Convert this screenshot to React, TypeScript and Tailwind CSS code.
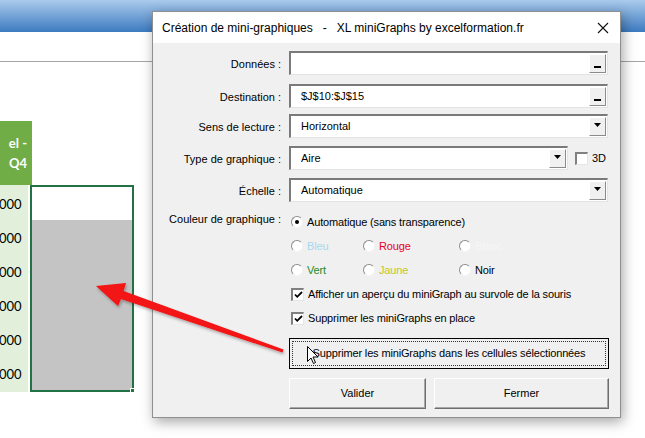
import React from "react";

const ui = { fontFamily: '"Liberation Sans", Arial, sans-serif' };
const sheet = { fontFamily: 'Lato, "Open Sans", sans-serif' };

const values = ["000", "000", "000", "000", "000", "000"];

function SideButton({ kind }: { kind: "range" | "drop" }) {
  return (
    <div className="m-[1px] flex w-[17px] items-end justify-center border border-t-white border-l-white border-b-[#8a8a8a] border-r-[#8a8a8a] bg-[#f0f0f0]">
      {kind === "range" ? (
        <div className="mb-[4px] h-[2px] w-[7px] bg-black" />
      ) : (
        <svg width="7" height="4" viewBox="0 0 7 4" className="mb-[8px]">
          <path d="M0 0h7L3.5 4z" fill="#000" />
        </svg>
      )}
    </div>
  );
}

function Field({ value, kind, wide = true }: { value?: string; kind: "range" | "drop"; wide?: boolean }) {
  return (
    <div
      className={
        (wide ? "w-[319px] " : "w-[279px] ") +
        "flex h-[24px] items-stretch border-t-2 border-l-2 border-b border-r border-t-[#7a7a7a] border-l-[#7a7a7a] border-b-[#e3e3e3] border-r-[#e3e3e3] bg-white"
      }
    >
      <div className="flex flex-1 items-center pl-[10px] text-[11px] text-black">{value}</div>
      <SideButton kind={kind} />
    </div>
  );
}

function Row({ label, children, className }: { label: string; children: React.ReactNode; className: string }) {
  return (
    <div className={"flex items-center gap-[8px] " + className}>
      <div className="w-[128px] pt-[2px] text-right text-[11px] text-black">{label}</div>
      {children}
    </div>
  );
}

function Radio({ checked = false }: { checked?: boolean }) {
  return (
    <div className="flex h-[12px] w-[12px] shrink-0 items-center justify-center rounded-full border border-t-[#8c8c8c] border-l-[#8c8c8c] border-b-[#f4f4f4] border-r-[#f4f4f4] bg-white">
      {checked && <div className="h-[4px] w-[4px] rounded-full bg-black" />}
    </div>
  );
}

function Check() {
  return (
    <div className="flex h-[13px] w-[13px] shrink-0 items-center justify-center border-t-2 border-l-2 border-b border-r border-t-[#808080] border-l-[#808080] border-b-[#e6e6e6] border-r-[#e6e6e6] bg-white">
      <svg width="9" height="8" viewBox="0 0 9 8">
        <path d="M1 3.5l2.2 2.3L8 1" fill="none" stroke="#000" strokeWidth="1.8" />
      </svg>
    </div>
  );
}

function Option({ label, color, checked, w }: { label: string; color: string; checked?: boolean; w: string }) {
  return (
    <div className={"flex items-center gap-[4px] " + w}>
      <Radio checked={checked} />
      <span className="text-[11px] tracking-[-0.15px]" style={{ color }}>
        {label}
      </span>
    </div>
  );
}

function RaisedButton({ label, w }: { label: string; w: string }) {
  return (
    <div
      className={
        w +
        " flex h-[31px] items-center justify-center border border-t-white border-l-white border-b-[#6e6e6e] border-r-[#6e6e6e] bg-[#f0f0f0] text-[11px] text-black shadow-[inset_-1px_-1px_0_#a8a8a8]"
      }
    >
      {label}
    </div>
  );
}

export default function App() {
  return (
    <div className="relative h-[438px] w-[645px] overflow-hidden bg-white" style={ui}>
      {/* Excel background */}
      <div className="h-[32px] bg-linear-to-b from-[#aacbeb] to-[#3c7bc0]" />
      <div className="h-[30px] border-b border-[#a6a6a6] bg-white" />
      <div className="flex" style={sheet}>
        <div className="w-[30px] pt-[59px]">
          <div className="flex h-[64px] w-[32px] flex-col items-end justify-center bg-[#70ad47] pr-[5px] text-[13px] font-bold leading-[20px] text-white">
            <span>el -</span>
            <span>Q4</span>
          </div>
          <div className="flex w-[28px] flex-col bg-[#e2efda] pt-[3px]">
            {values.map((v, i) => (
              <div key={i} className="flex h-[34px] items-center text-[13px] text-black">
                <span className="-ml-[1px]">{v}</span>
              </div>
            ))}
          </div>
        </div>
        <div className="relative mt-[123px] flex h-[207px] w-[104px] flex-col border-2 border-[#217346]">
          <div className="h-[33px] bg-white" />
          <div className="flex-1 bg-[#c4c4c4]" />
          <div className="absolute -bottom-[3px] -right-[3px] h-[5px] w-[5px] border border-white bg-[#217346]" />
        </div>
      </div>

      {/* Dialog */}
      <div className="absolute left-[152px] top-[11px] w-[469px] border border-[#8f8f8f] bg-[#f0f0f0] shadow-[2px_4px_12px_rgba(0,0,0,0.35)]">
        <div className="flex h-[31px] items-center justify-between bg-white pl-[9px] pr-[11px]">
          <span className="whitespace-pre text-[12px] text-black">
            Création de mini-graphiques   -   XL miniGraphs by excelformation.fr
          </span>
          <svg width="12" height="12" viewBox="0 0 12 12">
            <path d="M1 1l10 10M11 1L1 11" stroke="#111" strokeWidth="1.1" />
          </svg>
        </div>
        <div className="flex flex-col pb-[8px] pt-[8px]">
          <Row label="Données :" className="">
            <Field kind="range" />
          </Row>
          <Row label="Destination :" className="mt-[9px]">
            <Field kind="range" value="$J$10:$J$15" />
          </Row>
          <Row label="Sens de lecture :" className="mt-[6px]">
            <Field kind="drop" value="Horizontal" />
          </Row>
          <Row label="Type de graphique :" className="mt-[8px]">
            <Field kind="drop" value="Aire" wide={false} />
            <div className="ml-[-1px] flex items-center gap-[4px]">
              <div className="h-[13px] w-[13px] border-t-2 border-l-2 border-b border-r border-t-[#808080] border-l-[#808080] border-b-[#e6e6e6] border-r-[#e6e6e6] bg-white" />
              <span className="text-[11px]">3D</span>
            </div>
          </Row>
          <Row label="Échelle :" className="mt-[8px]">
            <Field kind="drop" value="Automatique" />
          </Row>
          <div className="mt-[8px] flex gap-[10px]">
            <div className="w-[128px] pt-[1px] text-right text-[11px]">Couleur de graphique :</div>
            <div className="flex flex-col">
              <div className="flex h-[24px] items-center">
                <Option label="Automatique (sans transparence)" color="#000" checked w="" />
              </div>
              <div className="flex h-[24px] items-center">
                <Option label="Bleu" color="#a6d8f2" w="w-[72px]" />
                <Option label="Rouge" color="#e8001c" w="w-[96px]" />
                <Option label="Blanc" color="#f6f6f6" w="" />
              </div>
              <div className="flex h-[24px] items-center">
                <Option label="Vert" color="#1d8a25" w="w-[72px]" />
                <Option label="Jaune" color="#c6c81a" w="w-[96px]" />
                <Option label="Noir" color="#000" w="" />
              </div>
              <div className="flex h-[24px] items-center gap-[4px]">
                <Check />
                <span className="text-[11px] tracking-[-0.15px]">Afficher un aperçu du miniGraph au survole de la souris</span>
              </div>
              <div className="flex h-[24px] items-center gap-[4px]">
                <Check />
                <span className="text-[11px] tracking-[-0.15px]">Supprimer les miniGraphs en place</span>
              </div>
            </div>
          </div>
          <div className="ml-[136px] mt-[8px] flex w-[320px] flex-col gap-[9px]">
            <div className="h-[31px] border border-black bg-[#f0f0f0] p-[2px]">
              <div className="flex h-full items-center justify-center border border-dotted border-[#333] text-[11px] tracking-[-0.15px]">
                Supprimer les miniGraphs dans les cellules sélectionnées
              </div>
            </div>
            <div className="flex gap-[8px]">
              <RaisedButton label="Valider" w="w-[137px]" />
              <RaisedButton label="Fermer" w="flex-1" />
            </div>
          </div>
        </div>
      </div>

      {/* Red annotation arrow */}
      <svg className="pointer-events-none absolute left-0 top-0" width="645" height="438" viewBox="0 0 645 438">
        <defs>
          <filter id="sh" x="-10%" y="-10%" width="130%" height="140%">
            <feDropShadow dx="1" dy="2" stdDeviation="1.5" floodColor="#000" floodOpacity="0.3" />
          </filter>
        </defs>
        <polygon
          points="96,286 126,283 123.5,291 283.5,349.5 282.5,352.5 121,299 118,306"
          fill="#f21212"
          filter="url(#sh)"
        />
      </svg>

      {/* Mouse cursor */}
      <svg className="pointer-events-none absolute left-[307px] top-[346px]" width="12" height="19" viewBox="0 0 12 19">
        <path d="M0.5 0.5v15l3.5-3.5 2.5 5.5 2-1-2.5-5.5h5z" fill="#fff" stroke="#000" strokeWidth="1" />
      </svg>
    </div>
  );
}
